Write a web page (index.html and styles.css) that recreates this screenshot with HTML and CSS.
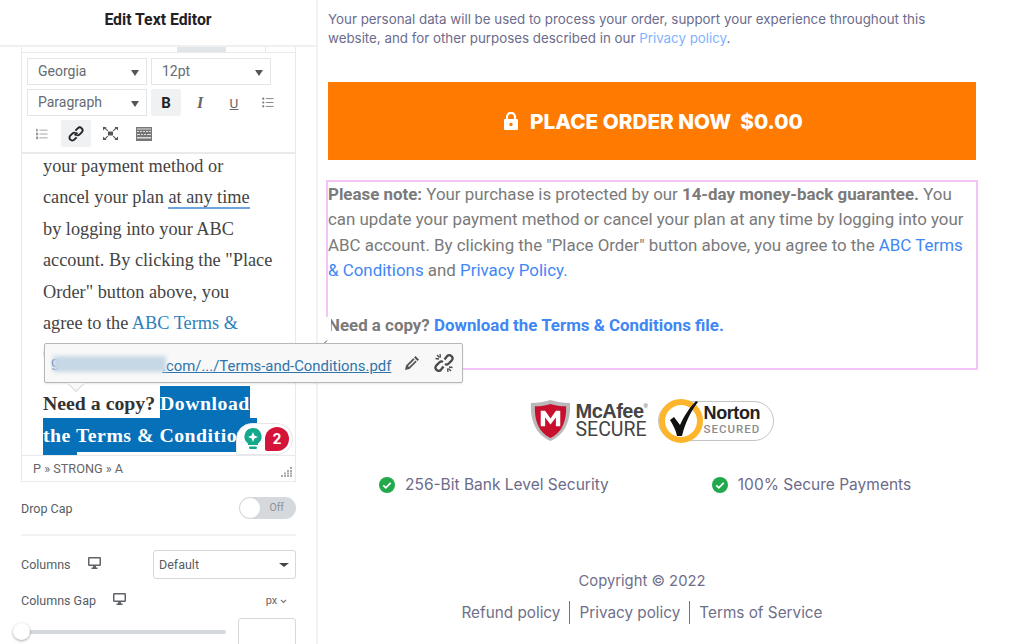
FILE: index.html
```html
<!DOCTYPE html>
<html lang="en">
<head>
    <meta charset="UTF-8">
    <meta name="viewport" content="width=device-width, initial-scale=1.0">
    <title>Edit Text Editor</title>
    <link rel="stylesheet" href="styles.css">
</head>
<body>
    <div class="page">
        <aside class="panel">
            <h1 class="panel-title">Edit Text Editor</h1>
            <div class="panel-body">
                <div class="editor">
                    <div class="tabs-sliver"><span class="tab-active"></span><span class="tab-gap"></span></div>
                    <div class="toolbar">
                        <div class="tool-row">
                            <div class="pick pick-font">Georgia<i class="caret"></i></div>
                            <div class="pick pick-size">12pt<i class="caret"></i></div>
                        </div>
                        <div class="tool-row">
                            <div class="pick pick-font">Paragraph<i class="caret"></i></div>
                            <div class="tool on"><b class="tool-b">B</b></div>
                            <div class="tool"><i class="tool-i">I</i></div>
                            <div class="tool"><span class="tool-u">U</span></div>
                            <div class="tool">
                                <svg width="12" height="11" viewBox="0 0 14 12"><g fill="#777"><circle cx="1.5" cy="1.5" r="1.3"/><circle cx="1.5" cy="6" r="1.3"/><circle cx="1.5" cy="10.5" r="1.3"/><rect x="4.5" y="1" width="9" height="1"/><rect x="4.5" y="5.5" width="9" height="1"/><rect x="4.5" y="10" width="9" height="1"/></g></svg>
                            </div>
                        </div>
                        <div class="tool-row">
                            <div class="tool">
                                <svg width="12" height="12" viewBox="0 0 14 13"><g fill="#999"><rect x="0" y="0.5" width="2" height="3"/><rect x="0" y="5" width="2.5" height="3"/><rect x="0" y="9.5" width="2.5" height="3"/><rect x="4" y="1.5" width="9.5" height="1"/><rect x="4" y="6" width="9.5" height="1"/><rect x="4" y="10.5" width="9.5" height="1"/></g></svg>
                            </div>
                            <div class="tool on">
                                <svg width="16" height="16" viewBox="0 0 16 16" fill="none" stroke="#222" stroke-width="1.9"><path d="M6.6 9.4 9.4 6.6"/><path d="M7.4 4.6 9.7 2.3a2.6 2.6 0 0 1 4 4l-2.3 2.3a2.6 2.6 0 0 1-3 .4"/><path d="M8.6 11.4 6.3 13.7a2.6 2.6 0 0 1-4-4l2.3-2.3a2.6 2.6 0 0 1 3-.4"/></svg>
                            </div>
                            <div class="tool">
                                <svg width="15" height="13" viewBox="0 0 15 13"><g fill="#555"><rect x="5" y="4.5" width="5" height="4"/><path d="M0 0h3.6L2.6 1l2.6 2.4-.8.8L1.8 1.8 0 3.4zM15 0h-3.6l1 1-2.6 2.4.8.8 2.6-2.4L15 3.4zM0 13h3.6l-1-1 2.6-2.4-.8-.8-2.6 2.4L0 9.6zM15 13h-3.6l1-1-2.6-2.4.8-.8 2.6 2.4L15 9.6z"/></g></svg>
                            </div>
                            <div class="tool">
                                <svg width="16" height="14" viewBox="0 0 16 14"><rect width="16" height="14" fill="#777"/><g fill="#ddd"><rect x="1" y="1.5" width="14" height="1"/><rect x="1" y="4" width="2" height="1"/><rect x="4" y="4" width="2" height="1"/><rect x="7" y="4" width="2" height="1"/><rect x="10" y="4" width="2" height="1"/><rect x="13" y="4" width="2" height="1"/><rect x="1" y="7" width="3" height="1"/><rect x="5" y="7" width="2" height="1"/><rect x="8" y="7" width="2" height="1"/><rect x="11" y="7" width="4" height="1"/><rect x="1" y="10" width="14" height="1.5"/></g></svg>
                            </div>
                        </div>
                    </div>
                    <div class="content">
                        <p>your payment method or<br>cancel your plan <span class="spell">at any time</span><br>by logging into your ABC<br>account. By clicking the "Place<br>Order" button above, you<br>agree to the <a class="ed-link">ABC Terms &amp;<br>Conditions</a> and <a class="ed-link">Privacy Policy.</a></p>
                        <p><strong>Need a copy? <span class="sel">Download<br>the Terms &amp; Conditions<br>file.</span></strong></p>
                        <div class="grammarly">
                            <svg width="18" height="22" viewBox="0 0 18 22"><path d="M9 0a8.5 8.5 0 0 0-5 15.4V17h10v-1.6A8.5 8.5 0 0 0 9 0z" fill="#14a88c"/><rect x="5" y="18.5" width="8" height="2.5" rx="1.2" fill="#14a88c"/><path d="M9 4l1.4 3.6L14 9l-3.6 1.4L9 14l-1.4-3.6L4 9l3.6-1.4z" fill="#fff"/></svg>
                            <span class="g-count">2</span>
                        </div>
                    </div>
                    <div class="statusbar">
                        <span>P » STRONG » A</span>
                        <svg width="11" height="11" viewBox="0 0 11 11"><g fill="#aaa"><rect x="9" y="1" width="2" height="2"/><rect x="6" y="4" width="2" height="2"/><rect x="9" y="4" width="2" height="2"/><rect x="3" y="6.500" width="2" height="2"/><rect x="6" y="6.500" width="2" height="2"/><rect x="9" y="6.500" width="2" height="2"/><rect x="0" y="9" width="2" height="2"/><rect x="3" y="9" width="2" height="2"/><rect x="6" y="9" width="2" height="2"/><rect x="9" y="9" width="2" height="2"/></g></svg>
                    </div>
                </div>

                <div class="control control-dropcap">
                    <span>Drop Cap</span>
                    <div class="switch"><i class="knob"></i><span>Off</span></div>
                </div>
                <div class="control control-columns">
                    <span class="with-icon">Columns
                        <svg class="monitor" width="13" height="12" viewBox="0 0 13 12"><path d="M1.300 0h10.400a1.300 1.300 0 0 1 1.300 1.300v6.400A1.300 1.300 0 0 1 11.700 9H8v1.500h1.500V12h-6v-1.500H5V9H1.300A1.300 1.300 0 0 1 0 7.700V1.300A1.300 1.300 0 0 1 1.300 0zm.2 1.500v6h10v-6z" fill="#5f6368"/></svg>
                    </span>
                    <div class="select-box">Default<i class="caret dark"></i></div>
                </div>
                <div class="control control-gap">
                    <span class="with-icon">Columns Gap
                        <svg class="monitor" width="13" height="12" viewBox="0 0 13 12"><path d="M1.300 0h10.400a1.300 1.300 0 0 1 1.300 1.300v6.400A1.300 1.300 0 0 1 11.700 9H8v1.500h1.500V12h-6v-1.500H5V9H1.300A1.300 1.300 0 0 1 0 7.700V1.300A1.300 1.300 0 0 1 1.300 0zm.2 1.500v6h10v-6z" fill="#5f6368"/></svg>
                    </span>
                    <span class="unit">px <svg width="7" height="5" viewBox="0 0 7 5" fill="none" stroke="#777" stroke-width="1.100"><path d="M1 1l2.500 2.500L6 1"/></svg></span>
                </div>
                <div class="control control-slider">
                    <div class="slider"><i class="slider-knob"></i></div>
                    <div class="num-input"></div>
                </div>
            </div>
        </aside>

        <main class="checkout">
            <p class="privacy">Your personal data will be used to process your order, support your experience throughout this website, and for other purposes described in our <a>Privacy policy</a>.</p>
            <button class="order-btn">
                <svg width="14" height="18" viewBox="0 0 14 18"><path d="M3 7.500V4.800a4 4 0 0 1 8 0v2.700" fill="none" stroke="#fff" stroke-width="2.200"/><path d="M1 7h12a1 1 0 0 1 1 1v9a1 1 0 0 1-1 1H1a1 1 0 0 1-1-1V8a1 1 0 0 1 1-1z" fill="#fff"/><circle cx="7" cy="12.500" r="1.700" fill="#ff7a00"/></svg>
                <span>PLACE ORDER NOW &nbsp;$0.00</span>
            </button>
            <div class="note">
                <p><strong>Please note:</strong> Your purchase is protected by our <strong>14-day money-back guarantee.</strong> You can update your payment method or cancel your plan at any time by logging into your ABC account. By clicking the "Place Order" button above, you agree to the <a>ABC Terms &amp; Conditions</a> and <a>Privacy Policy.</a></p>
                <p><strong>Need a copy? <a>Download the Terms &amp; Conditions file.</a></strong></p>
            </div>
            <div class="badges">
                <div class="mcafee">
                    <svg width="41" height="41" viewBox="0 0 42 42"><path d="M1 3c7 0 14-1 20-3 6 2 13 3 20 3 1 18-5 32-20 39C6 35 0 21 1 3z" fill="#b9b9b9"/><path d="M5 6.500c6 0 11-1 16-2.500 5 1.500 10 2.500 16 2.500 .5 15-4 27-16 32.500C9 33.500 4.500 21.500 5 6.500z" fill="#c8102e"/><path d="M11 27V11h4.500l5.500 8 5.500-8H31v16h-4.500v-9L21 25l-5.500-7v9z" fill="#fff"/></svg>
                    <div class="mcafee-text"><b>McAfee<sup>®</sup></b><span>SECURE</span></div>
                </div>
                <div class="norton">
                    <svg class="norton-mark" width="46" height="46" viewBox="0 0 46 46"><circle cx="23" cy="23" r="19" fill="#fff" stroke="#fdb52b" stroke-width="6"/><path d="M12 22l4-3 6 8C26 18 32 9 38 3l2 1C33 13 27 25 24 38h-5c-1-6-4-11-7-16z" fill="#111"/></svg>
                    <div class="norton-text"><b>Norton</b><span>SECURED</span></div>
                </div>
            </div>
            <div class="checks">
                <div class="check-item">
                    <svg width="16" height="16" viewBox="0 0 16 16"><circle cx="8" cy="8" r="8" fill="#22a94b"/><path d="M4.300 8.300l2.500 2.500 4.900-5" fill="none" stroke="#fff" stroke-width="1.800"/></svg>
                    256-Bit Bank Level Security
                </div>
                <div class="check-item">
                    <svg width="16" height="16" viewBox="0 0 16 16"><circle cx="8" cy="8" r="8" fill="#22a94b"/><path d="M4.300 8.300l2.500 2.500 4.900-5" fill="none" stroke="#fff" stroke-width="1.800"/></svg>
                    100% Secure Payments
                </div>
            </div>
            <footer class="footer">
                <div class="copyright">Copyright © 2022</div>
                <nav class="footer-links"><a>Refund policy</a><a>Privacy policy</a><a>Terms of Service</a></nav>
            </footer>
        </main>

        <!-- inline link popup that hangs over the panel edge -->
        <div class="edge-patch"><svg width="6" height="6" viewBox="0 0 6 6" fill="none" stroke="#555" stroke-width="1"><path d="M5 0.500 1.500 4 3 5.500"/></svg></div>
        <div class="link-popup">
            <span class="blur-url"></span>
            <a class="popup-url"><span class="url-g">g</span>.com/.../Terms-and-Conditions.pdf</a>
            <svg class="popup-ico" width="16" height="16" viewBox="0 0 16 16"><path d="M11.500 1l3.500 3.500-1.500 1.500L10 2.500zM9.200 3.300l3.500 3.500L5.500 14 1 15l1-4.500zM4 11l1 1 6.500-6.500-1-1z" fill="#555" fill-rule="evenodd"/></svg>
            <svg class="popup-ico unlink" width="20" height="20" viewBox="0 0 20 20" fill="none" stroke="#4a4a4a" stroke-width="2.300"><path d="M10.500 6.500 13.200 3a3.200 3.200 0 0 1 4.600 4.400l-3.300 3.300a3 3 0 0 1-3.500.4"/><path d="M9.500 13.500 6.800 17a3.200 3.200 0 0 1-4.600-4.400l3.300-3.300a3 3 0 0 1 3.500-.4"/><path d="M1.500 5.500l3.500 .5M3 2l2.500 2.500M6 1l.5 3.500M18.500 14.500l-3.500-.5M17 18l-2.500-2.500M14 19l-.5-3.500" stroke-width="1.300"/></svg>
        </div>
    </div>
</body>
</html>
```

FILE: styles.css
```css
* { box-sizing: border-box; }
html, body { margin: 0; height: 100%; overflow: hidden; background: #fff; }
body { font-family: Roboto, sans-serif; color: #555d66; }
p { margin: 0; }

.page {
    position: relative;
    display: flex;
    width: 1024px;
    height: 644px;
    overflow: hidden;
}

/* left panel */
.panel {
    width: 318px;
    flex: none;
    height: 644px;
    border-right: 2px solid #f1f2f3;
    overflow: hidden;
}
.panel-title {
    margin: 0;
    height: 47px;
    line-height: 40px;
    text-align: center;
    font-size: 15.800px;
    font-weight: 700;
    color: #1f2124;
    border-bottom: 2px solid #eef0f1;
}
.panel-body { padding: 0 21px 0 21px; }
.editor {
    width: 275px;
    border: 1px solid #e8eaec;
    border-top: 0;
    height: 435px;
    display: flex;
    flex-direction: column;
}
.tabs-sliver {
    height: 6px;
    flex: none;
    display: flex;
    border-bottom: 1px solid #e8eaec;
    padding-left: 155px;
}
.tab-active { width: 49px; background: #e2e5e8; }
.tab-gap { width: 40px; border-right: 1px solid #e4e6e8; }
.toolbar {
    height: 101px;
    flex: none;
    padding: 5px 5px 0;
    border-bottom: 2px solid #e8eaec;
}
.tool-row {
    display: flex;
    gap: 4px;
    height: 27px;
    margin-bottom: 4px;
    align-items: stretch;
}
.pick {
    position: relative;
    border: 1px solid #e3e5e7;
    font-size: 14px;
    line-height: 25px;
    padding-left: 10px;
    color: #666c72;
}
.pick-font { width: 120px; }
.pick-size { width: 120px; }
.caret {
    position: absolute;
    right: 7px;
    top: 11px;
    border-left: 4px solid transparent;
    border-right: 4px solid transparent;
    border-top: 6px solid #555;
}
.caret.dark { right: 6px; top: 12px; border-top-color: #444; border-left-width: 5px; border-right-width: 5px; border-top-width: 4px; }
.tool {
    width: 30px;
    display: flex;
    align-items: center;
    justify-content: center;
    border-radius: 2px;
    color: #666;
}
.tool.on { background: #f0f1f2; }
.tool-b { font-size: 15px; color: #222; }
.tool-i { font-family: "Liberation Serif", serif; font-size: 16px; font-weight: 700; color: #666; }
.tool-u { font-size: 13.500px; text-decoration: underline; color: #666; }

.content {
    position: relative;
    flex: 1;
    overflow: hidden;
    padding: 0 21px;
    font-family: "Liberation Serif", serif;
    font-size: 18.300px;
    line-height: 31.400px;
    color: #444;
    white-space: nowrap;
}
.content p:first-child { margin-top: -3px; }
.content p + p { margin-top: 17px; }
.content strong { color: #333; font-size: 19.800px; }
.ed-link { color: #2e80ba; }
.spell { border-bottom: 2px solid #6ea4dc; }
.sel { background: #0670b9; color: #fff; padding: 6px 0; letter-spacing: 0.5px; }
.grammarly {
    position: absolute;
    right: 2px;
    bottom: 0;
    width: 57px;
    height: 32px;
    display: flex;
    align-items: center;
    justify-content: space-between;
    padding: 0 3px 0 7px;
    background: #fff;
    border: 1px solid #e4e6e8;
    border-radius: 16px 16px 16px 0;
}
.g-count {
    width: 24px;
    height: 24px;
    border-radius: 12px 12px 12px 2px;
    background: #d5143a;
    color: #fff;
    font: 700 15px/24px Roboto, sans-serif;
    text-align: center;
}
.statusbar {
    height: 26px;
    flex: none;
    border-top: 1px solid #e8eaec;
    display: flex;
    align-items: center;
    justify-content: space-between;
    padding: 0 3px 0 11px;
    font-size: 12.700px;
    color: #666;
}
.statusbar svg { align-self: flex-end; margin-bottom: 4px; }

.control { display: flex; align-items: center; justify-content: space-between; font-size: 12.500px; color: #555d66; }
.control-dropcap { height: 54px; border-bottom: 2px solid #f1f2f3; width: 275px; }
.switch {
    position: relative;
    width: 57px;
    height: 22px;
    border-radius: 11px;
    background: #d5d8dc;
    text-align: right;
    padding-right: 12px;
    font-size: 10.500px;
    line-height: 22px;
    color: #8c9196;
}
.knob {
    position: absolute;
    left: 1px;
    top: 1px;
    width: 20px;
    height: 20px;
    border-radius: 50%;
    background: #fff;
}
.control-columns { width: 275px; height: 28px; margin-top: 14px; }
.with-icon { display: flex; align-items: center; gap: 17px; }
.monitor { margin-top: -3px; }
.select-box {
    position: relative;
    width: 143px;
    height: 29px;
    border: 1px solid #d5d8dc;
    border-radius: 3px;
    padding-left: 5px;
    line-height: 27px;
    font-size: 12.500px;
}
.control-gap { width: 275px; height: 20px; margin-top: 12px; }
.unit { font-size: 11px; padding-right: 9px; color: #666; }
.control-slider { width: 275px; margin-top: 8px; height: 30px; align-items: flex-start; }
.slider {
    position: relative;
    width: 205px;
    height: 4px;
    margin-top: 12px;
    background: #d5d8dc;
    border-radius: 2px;
}
.slider-knob {
    position: absolute;
    left: -8px;
    top: -7px;
    width: 17px;
    height: 17px;
    border-radius: 50%;
    background: #fff;
    box-shadow: 0 1px 3px rgba(0, 0, 0, 0.35);
}
.num-input {
    width: 58px;
    height: 40px;
    border: 1px solid #d5d8dc;
    border-radius: 3px;
}

/* right side */
.checkout { flex: 1; padding: 10px 46px 0 10px; font-family: Inter, sans-serif; color: #6b6b8a; }
.privacy { font-size: 13.330px; line-height: 19px; width: 620px; color: #6c6c8c; }
.privacy a { color: #80b3ff; }
.order-btn {
    display: flex;
    align-items: center;
    justify-content: center;
    gap: 12px;
    width: 648px;
    height: 78px;
    margin-top: 34px;
    border: 0;
    padding: 0 0 0 3px;
    background: #ff7a00;
    color: #fff;
    font-family: Inter, sans-serif;
    font-size: 20.700px;
    font-weight: 800;
}
.note {
    width: 652px;
    height: 190px;
    margin: 20px 0 0 -2px;
    padding: 0;
    border: 2px solid #f5c4f6;
    font-family: Roboto, sans-serif;
    font-size: 16.900px;
    line-height: 25.400px;
    color: #7a7a7a;
}
.note p + p { margin-top: 29.600px; }
.note a { color: #3f87f5; }
.badges { display: flex; justify-content: center; align-items: center; gap: 10px; height: 50px; margin-top: 25px; padding-right: 2px; }
.mcafee { display: flex; align-items: center; gap: 4px; color: #444; }
.mcafee-text { display: flex; flex-direction: column; }
.mcafee-text b { font: 700 20px/20px "Liberation Sans", sans-serif; letter-spacing: -0.5px; }
.mcafee-text sup { font-size: 6px; font-weight: 400; vertical-align: 10px; line-height: 0; }
.mcafee-text span { font: 400 19.500px/18px Roboto, sans-serif; }
.norton {
    position: relative;
    width: 116px;
    height: 40px;
    margin-top: 2px;
    padding-left: 45px;
    border: 1px solid #c4c4c4;
    border-radius: 20px;
}
.norton-mark { position: absolute; left: -1px; top: -4px; }
.norton-text { display: flex; flex-direction: column; color: #222; margin-top: 2px; }
.norton-text b { font: 700 18px/19px "Liberation Sans", sans-serif; letter-spacing: -0.4px; }
.norton-text span { font: 500 11.500px/12px Roboto, sans-serif; letter-spacing: 1px; color: #8d8d8d; }
.checks { display: flex; margin-top: 30px; padding-left: 51px; gap: 103px; }
.check-item { display: flex; align-items: center; gap: 10px; font-size: 15.500px; color: #6b6b8a; }
.footer { text-align: center; margin-top: 78px; color: #6f6f8a; font-size: 14.800px; padding-right: 22px; }
.footer-links { display: flex; justify-content: center; margin-top: 11px; font-size: 15.300px; }
.footer-links a { padding: 0 9px; line-height: 23px; border-left: 1px solid #70708a; }
.footer-links a:first-child { border-left: 0; }

/* overlays */
.edge-patch {
    position: absolute;
    left: 318px;
    top: 317px;
    width: 13px;
    height: 28px;
    background: #fff;
}
.edge-patch svg { position: absolute; left: 4px; top: 23px; }
.link-popup {
    position: absolute;
    left: 44px;
    top: 343px;
    width: 419px;
    height: 40px;
    display: flex;
    align-items: center;
    padding: 1px 8px 0 6px;
    background: #f8f8f8;
    border: 1px solid #b8b8b8;
    border-radius: 2px;
    box-shadow: 0 1px 2px rgba(0, 0, 0, 0.1);
}
.link-popup::before {
    content: "";
    position: absolute;
    left: 23px;
    bottom: -9px;
    border-left: 8px solid transparent;
    border-right: 8px solid transparent;
    border-top: 8px solid #f8f8f8;
    filter: drop-shadow(0 1px 0 #ccc);
}
.popup-url {
    font-size: 14.900px;
    color: #2f75ab;
    text-decoration: underline;
    white-space: nowrap;
    flex: 1;
}
.url-g { display: inline-block; width: 111px; overflow: hidden; }
.blur-url {
    position: absolute;
    left: 8px;
    top: 12px;
    width: 113px;
    height: 16px;
    background: #c6d7e6;
    filter: blur(2px);
    z-index: 1;
}
.popup-ico { flex: none; margin-left: 12px; margin-top: -1px; }
.popup-ico.unlink { margin-left: 14px; }
```
